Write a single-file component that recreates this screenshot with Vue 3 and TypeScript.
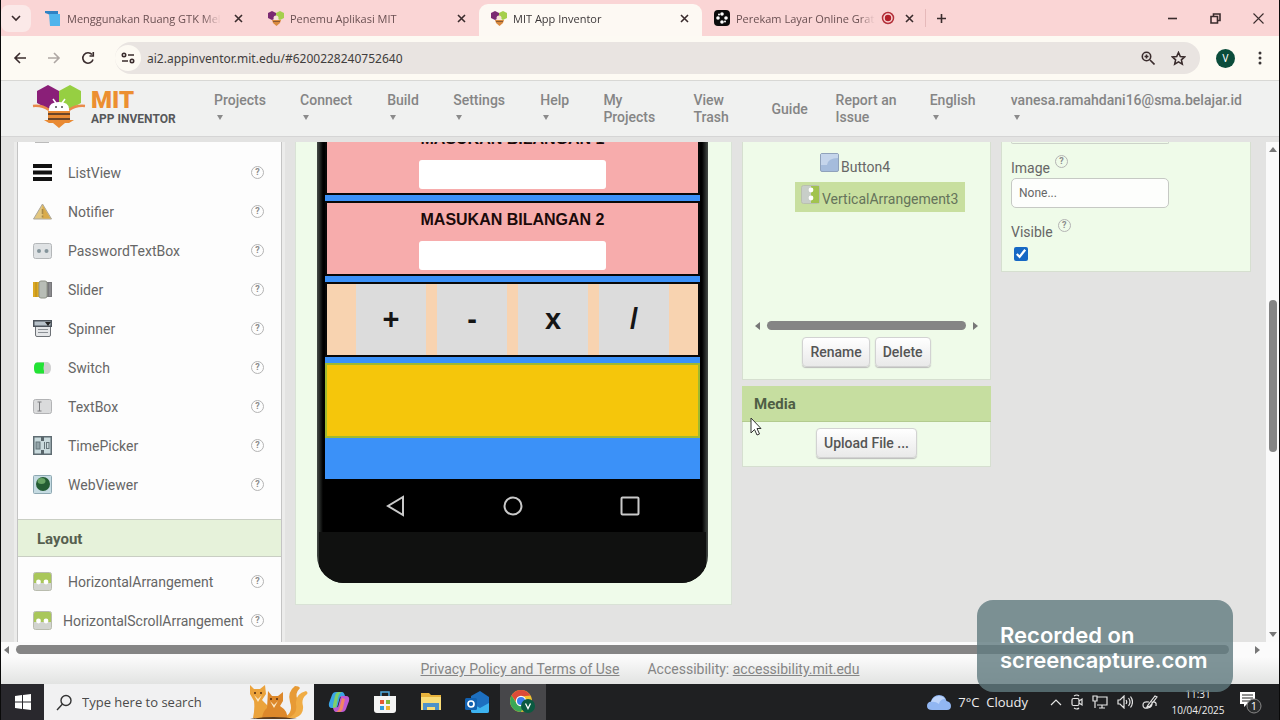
<script setup lang="ts">
interface PaletteItem { name: string; art: string; wide?: boolean }
interface MenuItem { label: string; drop: boolean }
interface BrowserTab { title: string; icon: 'doc' | 'bee' | 'rec'; active: boolean; recording: boolean }

const tabs: BrowserTab[] = [
  { title: 'Menggunakan Ruang GTK Mela', icon: 'doc', active: false, recording: false },
  { title: 'Penemu Aplikasi MIT', icon: 'bee', active: false, recording: false },
  { title: 'MIT App Inventor', icon: 'bee', active: true, recording: false },
  { title: 'Perekam Layar Online Gratis', icon: 'rec', active: false, recording: true },
]

const tabArt: Record<BrowserTab['icon'], string> = {
  doc: '<path d="M0 1h13v4h-8L3 4 0 3z" fill="#2f82c4"/><path d="M4 4h11v12H5z" fill="#4fb4ec"/>',
  bee: '<path d="M0 3l4-2 4 2v5l-4 2-4-2z" fill="#7a2a72"/><path d="M8 3l4-2 4 2v5l-4 2-4-2z" fill="#a5cf4c"/><circle cx="8" cy="8" r="2.500" fill="#f7e3d8"/><path d="M4 10h9l-1 3-3.500 3L5 13z" fill="#d98a3f"/><path d="M5 11.500h7" stroke="#8b5a33"/>',
  rec: '<rect width="16" height="16" rx="4" fill="#0b0b0b"/><g fill="#fff"><circle cx="8" cy="4" r="1.800"/><circle cx="8" cy="12" r="1.800"/><circle cx="4" cy="8" r="1.800"/><circle cx="12" cy="8" r="1.800"/><circle cx="5" cy="4.500" r="1"/><circle cx="11" cy="11.500" r="1"/></g>',
}

const menu: MenuItem[] = [
  { label: 'Projects', drop: true },
  { label: 'Connect', drop: true },
  { label: 'Build', drop: true },
  { label: 'Settings', drop: true },
  { label: 'Help', drop: true },
  { label: 'My Projects', drop: false },
  { label: 'View Trash', drop: false },
  { label: 'Guide', drop: false },
  { label: 'Report an Issue', drop: false },
  { label: 'English', drop: true },
  { label: 'vanesa.ramahdani16@sma.belajar.id', drop: true },
]

const arrangeArt =
  '<rect x=".5" y=".5" width="18" height="18" rx="2" fill="#d2d4cf" stroke="#b9bcae"/><path d="M1 2.500Q1 1 2.500 1h14Q18 1 18 2.500V11H1z" fill="#a9c75a"/><circle cx="5.500" cy="10" r="2.400" fill="#fff"/><circle cx="13" cy="10" r="2.400" fill="#fff"/>'

const userInterface: PaletteItem[] = [
  { name: 'ListView', art: '<path d="M0 3h19M0 9.500h19M0 16h19" stroke="#111" stroke-width="4"/>' },
  { name: 'Notifier', art: '<path d="M9.500 2L18.500 17H.5z" fill="#e3c77f" stroke="#aaa69a"/><path d="M9.500 3L17.500 16.500h-8z" fill="#d9ab4a"/><path d="M9.500 7v5M9.500 13.500v2" stroke="#a88a48" stroke-width="1.600"/>' },
  { name: 'PasswordTextBox', art: '<rect x=".5" y="2.500" width="18" height="15" rx="2" fill="#dfe2e4" stroke="#b4b7b9"/><circle cx="6" cy="10" r="2" fill="#84949b"/><circle cx="13.500" cy="10" r="2" fill="#84949b"/>' },
  { name: 'Slider', art: '<path d="M0 2h8v15H0z" fill="#dca923"/><path d="M12 2h7v15h-7z" fill="#77777a"/><rect x="6" y="1" width="8" height="17" rx="2" fill="#b8bdb6" stroke="#909488"/><path d="M3 2v15" stroke="#b68a1a"/><path d="M17 3v13" stroke="#a0a0a2"/>' },
  { name: 'Spinner', art: '<rect x="2.500" y="5.500" width="15" height="12" rx="1.500" fill="#e4e6e8" stroke="#6d7176"/><rect x=".75" y="1.750" width="17.500" height="5.500" fill="#b8c2ca" stroke="#4d545c" stroke-width="1.500"/><path d="M12 3h6l-3 4z" fill="#222"/><path d="M5 10.500h10M5 13.500h10" stroke="#8b9095"/>' },
  { name: 'Switch', art: '<rect x="1" y="4" width="17" height="12" rx="5" fill="#d4d4d4"/><path d="M4 4.500h7v11H4q-3 0-3-5.500t3-5.500z" fill="#22e334"/><ellipse cx="14" cy="10" rx="3.500" ry="6" fill="#cfd0cf"/>' },
  { name: 'TextBox', art: '<rect x=".5" y="2.500" width="18" height="14" rx="2" fill="#dadbdc" stroke="#b2b3b5"/><path d="M4.500 5h4M6.500 5v9M4.500 14h4" stroke="#7c7d80"/>' },
  { name: 'TimePicker', art: '<rect x=".75" y=".75" width="17.500" height="17.500" fill="#c9dadd" stroke="#5f6c72" stroke-width="1.500"/><path d="M9.500 1v4M9.500 14v4" stroke="#59666b" stroke-width="3"/><rect x="3" y="6" width="4" height="7" fill="#93a4a8" stroke="#65757a"/><path d="M11.500 6v7" stroke="#65757a"/><rect x="13.500" y="6.500" width="2.500" height="6" fill="none" stroke="#65757a"/>' },
  { name: 'WebViewer', art: '<rect x=".5" y=".5" width="18" height="18" rx="1" fill="#c5dbe2" stroke="#8ea8b2"/><circle cx="10" cy="9" r="7" fill="#245c33"/><ellipse cx="8.500" cy="6" rx="4" ry="3" fill="#67a364"/>' },
]

const layout: PaletteItem[] = [
  { name: 'HorizontalArrangement', art: arrangeArt },
  { name: 'HorizontalScrollArrangement', art: arrangeArt, wide: true },
]

const operators = ['+', '-', 'x', '/']
</script>

<template>
  <div class="screen">
    <header class="tabstrip">
      <button class="tab-search" aria-label="Search tabs"><svg width="10" height="8" viewBox="0 0 10 8"><path d="M1 2l4 4 4-4" /></svg></button>
      <div v-for="t in tabs" :key="t.title" class="tab" :class="{ active: t.active, rec: t.recording }">
        <svg class="fav" width="16" height="17" viewBox="0 0 16 17" v-html="tabArt[t.icon]"></svg>
        <span class="tab-title">{{ t.title }}</span>
        <svg v-if="t.recording" class="rec-dot" width="14" height="14" viewBox="0 0 14 14"><circle cx="7" cy="7" r="5.500" fill="none" stroke="#b3303a" stroke-width="1.500" /><circle cx="7" cy="7" r="3.200" fill="#b3202a" /></svg>
        <button class="tab-close" aria-label="Close tab"><svg width="9" height="9" viewBox="0 0 9 9"><path d="M1 1l7 7M8 1L1 8" /></svg></button>
      </div>
      <button class="new-tab" aria-label="New tab"><svg width="11" height="11" viewBox="0 0 11 11"><path d="M5.500 1v9M1 5.500h9" /></svg></button>
      <div class="win">
        <button aria-label="Minimize"><svg width="11" height="11" viewBox="0 0 11 11"><path d="M1 5.500h9" /></svg></button>
        <button aria-label="Restore"><svg width="11" height="11" viewBox="0 0 11 11"><path d="M1 3.500h6.500V10H1zM3.500 3V1H10v6.500H8" /></svg></button>
        <button aria-label="Close"><svg width="11" height="11" viewBox="0 0 11 11"><path class="thin" d="M.5.5l10 10M10.500.5l-10 10" /></svg></button>
      </div>
    </header>

    <div class="toolbar">
      <button aria-label="Back"><svg width="14" height="14" viewBox="0 0 14 14"><path d="M13 7H2M7 2L2 7l5 5" /></svg></button>
      <button aria-label="Forward" class="dim"><svg width="14" height="14" viewBox="0 0 14 14"><path d="M1 7h11M7 2l5 5-5 5" /></svg></button>
      <button aria-label="Reload"><svg width="14" height="14" viewBox="0 0 14 14"><path d="M12 8.500A5.200 5.200 0 1 1 11 3.600M12.300 1v4H8.500" /></svg></button>
      <div class="omnibox">
        <span class="site"><svg width="14" height="12" viewBox="0 0 14 12"><circle cx="3" cy="3" r="1.700" /><path d="M7 3h6M1 9h6" /><circle cx="11" cy="9" r="1.700" /></svg></span>
        <input type="text" aria-label="Address" value="ai2.appinventor.mit.edu/#6200228240752640" />
        <button aria-label="Zoom"><svg width="14" height="14" viewBox="0 0 14 14"><circle cx="5.500" cy="5.500" r="4.200" /><path d="M9 9l4.500 4.500M3.500 5.500h4M5.500 3.500v4" /></svg></button>
        <button aria-label="Bookmark"><svg width="15" height="15" viewBox="0 0 15 15"><path d="M7.500 1.500l1.800 4 4.300.4-3.200 2.900.9 4.300-3.800-2.200-3.800 2.200.9-4.300L1.400 5.900l4.300-.4z" /></svg></button>
      </div>
      <button class="avatar">V</button>
      <button aria-label="Browser menu" class="dots"><svg width="4" height="14" viewBox="0 0 4 14"><circle cx="2" cy="2" r="1.500" /><circle cx="2" cy="7" r="1.500" /><circle cx="2" cy="12" r="1.500" /></svg></button>
    </div>

    <div class="appbar">
      <div class="brand">
        <svg width="54" height="44" viewBox="0 0 54 44">
          <path d="M5 6L16 0l11 6v12l-11 6-11-6z" fill="#8a1f78" />
          <path d="M27 6l11-6 11 6v12l-11 6-11-6z" fill="#96cf42" />
          <path d="M1 21q9-1 16 4M53 21q-9-1-16 4" fill="none" stroke="#e98a4b" stroke-width="2.500" />
          <path d="M17 24q0-7 10-7t10 7v3H17z" fill="#fff" />
          <path d="M24 18l-3-4M30 18l3-4" stroke="#fff" stroke-width="1.500" />
          <circle cx="24" cy="22" r="1" fill="#4b4b4b" /><circle cx="30" cy="22" r="1" fill="#4b4b4b" />
          <path d="M16 26h22v9h4l-5 3h-4l-6 5-6-5h-4l-5-3h4z" fill="#e98a33" />
          <path d="M16 29h22M16 34h22" stroke="#6b4528" stroke-width="2" />
        </svg>
        <div class="wordmark"><strong>MIT</strong><span>APP INVENTOR</span></div>
      </div>
      <nav class="menu">
        <a v-for="m in menu" :key="m.label" href="#" :class="{ drop: m.drop }">
          {{ m.label }}
          <svg v-if="m.drop" width="6" height="5" viewBox="0 0 6 5"><path d="M0 0h6L3 5z" /></svg>
        </a>
      </nav>
    </div>

    <div class="workarea">
      <main class="columns">
        <aside class="palette">
          <ul>
            <li class="cut"><i class="icon-end"></i></li>
            <li v-for="p in userInterface" :key="p.name">
              <svg width="19" height="19" viewBox="0 0 19 19" v-html="p.art"></svg>
              <span>{{ p.name }}</span><button class="help" :aria-label="'Help for ' + p.name">?</button>
            </li>
          </ul>
          <h2>Layout</h2>
          <ul class="second">
            <li v-for="p in layout" :key="p.name" :class="{ wide: p.wide }">
              <svg width="19" height="19" viewBox="0 0 19 19" v-html="p.art"></svg>
              <span>{{ p.name }}</span><button class="help" :aria-label="'Help for ' + p.name">?</button>
            </li>
          </ul>
        </aside>

        <section class="viewer">
          <div class="phone">
            <div class="display">
              <div class="block pink"><label for="n1">MASUKAN BILANGAN 1</label><input id="n1" type="text" /></div>
              <div class="block pink"><label for="n2">MASUKAN BILANGAN 2</label><input id="n2" type="text" /></div>
              <div class="block ops"><button v-for="o in operators" :key="o">{{ o }}</button></div>
              <div class="block gold"></div>
            </div>
            <div class="navkeys">
              <svg width="20" height="22" viewBox="0 0 20 22"><path d="M17 2v18L2 11z" /></svg>
              <svg width="20" height="22" viewBox="0 0 20 22"><circle cx="10" cy="11" r="8.500" /></svg>
              <svg width="20" height="22" viewBox="0 0 20 22"><rect x="1.500" y="2.500" width="17" height="17" rx="1" /></svg>
            </div>
            <div class="chin"></div>
          </div>
        </section>

        <div class="stack">
          <section class="panel tree">
            <div class="node child">
              <svg width="19" height="19" viewBox="0 0 19 19"><rect x=".5" y=".5" width="18" height="18" rx="1.500" fill="#a5bcdc" stroke="#90a2bb" /><path d="M1 1h17v4Q8 5 7 12H1z" fill="#c5d5eb" /></svg>
              <span>Button4</span>
            </div>
            <div class="node selected">
              <svg width="19" height="19" viewBox="0 0 19 19"><rect x=".5" y=".5" width="18" height="18" rx="2" fill="#c8cec8" stroke="#b9c0ae" /><path d="M10 1h8v17h-8z" fill="#a2c34f" /><circle cx="10" cy="5" r="2.400" fill="#fff" /><circle cx="10" cy="13" r="2.400" fill="#fff" /></svg>
              <span>VerticalArrangement3</span>
            </div>
            <div class="hbar small"><i class="left"></i><b></b><i class="right"></i></div>
            <div class="actions"><button class="btn">Rename</button><button class="btn">Delete</button></div>
          </section>
          <section class="panel media">
            <h2>Media</h2>
            <div class="actions"><button class="btn">Upload File ...</button></div>
          </section>
        </div>

        <section class="panel props">
          <div class="field-end"></div>
          <div class="prop"><label for="img">Image</label><button class="help" aria-label="Help for Image">?</button></div>
          <input id="img" class="field" type="text" value="None..." />
          <div class="prop"><label for="vis">Visible</label><button class="help" aria-label="Help for Visible">?</button></div>
          <input id="vis" class="check" type="checkbox" checked />
        </section>
      </main>
      <div class="vbar"><i class="up"></i><b></b><i class="down"></i></div>
    </div>

    <div class="hbar page"><i class="left"></i><b></b><i class="right"></i></div>

    <footer class="legal">
      <a href="#">Privacy Policy and Terms of Use</a>
      <span>Accessibility: <a href="#">accessibility.mit.edu</a></span>
    </footer>

    <div class="taskbar">
      <button class="start" aria-label="Start"><svg width="16" height="16" viewBox="0 0 16 16"><path d="M0 2l7-1v6.500H0zM8 1l8-1v7.500H8zM0 8.500h7V15l-7-1zM8 8.500h8V16l-8-1z" fill="#fff" /></svg></button>
      <div class="search">
        <svg width="17" height="17" viewBox="0 0 17 17"><circle cx="10" cy="6.500" r="5" /><path d="M6.500 10L1 16" /></svg>
        <input type="text" aria-label="Search" placeholder="Type here to search" />
        <svg class="fox" width="60" height="36" viewBox="0 0 60 36">
          <path d="M34 34Q46 30 42 18 39 8 47 2q4 0 5 2-6 6-2 12 3 8-4 18z" fill="#e79a35" />
          <path d="M40 34q10-4 8-14-1-10 10-13 3 2 0 4-5 4-3 11 1 9-8 12z" fill="#f0ac44" />
          <path d="M2 1l4 4h6l5-4 1 9-4 6 6 6 2 12H5q2-9 1-17L2 10z" fill="#eba33c" />
          <path d="M20 7l4 5h6l5-4v9l-3 5q8 5 7 12H14q1-7 5-10z" fill="#dd882b" />
          <path d="M6 11l4 4 4-4-4 7zM22 17l4 4 4-4-4 7z" fill="#fce8c5" />
          <path d="M6 9h2M12 9h2M22 15h2M28 15h2" stroke="#4d2a12" stroke-width="1.500" /><path d="M2 35q24-4 47 0z" fill="#5c3b1f" />
        </svg>
      </div>
      <div class="apps">
        <button aria-label="Copilot"><svg width="22" height="22" viewBox="0 0 22 22"><path d="M8 1h6q2 0 3 4l-5 1-3 11H4q-4 0-3-5l3-8q1-3 4-3z" fill="#3aa5e6" /><path d="M5 14l2-9q1-4 4-4h3q-3 1-4 6L8 17H5z" fill="#7ed06a" /><path d="M14 21H8q-2 0-3-4l5-1 3-11h5q4 0 3 5l-3 8q-1 3-4 3z" fill="#bd59d2" /><path d="M17 8l-2 9q-1 4-4 4H8q3-1 4-6l2-8z" fill="#f18564" /></svg></button>
        <button aria-label="Store"><svg width="22" height="22" viewBox="0 0 22 22"><path d="M7 5V1h8v4" fill="none" stroke="#4ea9df" stroke-width="1.500" /><path d="M0 5h22v14q0 3-3 3H3q-3 0-3-3z" fill="#f4f4f4" /><path d="M6 9h4v4H6z" fill="#e65a36" /><path d="M12 9h4v4h-4z" fill="#7fb93c" /><path d="M6 15h4v4H6z" fill="#319edb" /><path d="M12 15h4v4h-4z" fill="#efb52f" /></svg></button>
        <button aria-label="File Explorer"><svg width="22" height="22" viewBox="0 0 22 22"><path d="M1 2h8l2 2h10v15H1z" fill="#e8b33c" /><path d="M1 6h20v13H1z" fill="#f9dc77" /><path d="M3 19v-7h16v7h-4v-3H7v3z" fill="#4e91c8" /></svg></button>
        <button aria-label="Outlook"><svg width="24" height="22" viewBox="0 0 24 22"><path d="M6 5l9-5 9 6v14q0 2-2 2H8q-2 0-2-2z" fill="#1d6fc0" /><path d="M6 12l9 5 9-5v8q0 2-2 2H8q-2 0-2-2z" fill="#3db3ef" /><rect y="7" width="12" height="12" rx="1.500" fill="#1261b1" /><circle cx="6" cy="13" r="3" fill="none" stroke="#fff" stroke-width="1.700" /></svg></button>
        <button aria-label="Chrome" class="on"><svg width="26" height="24" viewBox="0 0 26 24"><circle cx="11" cy="11" r="11" fill="#f1c232" /><path d="M1.500 5.500A11 11 0 0 1 20.500 5.500L11 6.500 7 13z" fill="#dd4b39" /><path d="M1.500 5.500A11 11 0 0 0 11 22l4-8H7z" fill="#3aa757" /><circle cx="11" cy="11" r="5.200" fill="#fff" /><circle cx="11" cy="11" r="4" fill="#3b7ded" /><circle cx="18" cy="16" r="7" fill="#0b5a41" /><path d="M15.500 13.500l2.500 5 2.500-5" fill="none" stroke="#fff" stroke-width="1.300" /></svg></button>
      </div>
      <div class="tray">
        <svg width="24" height="15" viewBox="0 0 24 15"><path d="M5 15q-5 0-5-4 0-4 4-4.500Q6 0 12 0t7.500 6Q24 7 24 11t-4 4z" fill="#91b6f2" /><path d="M4 7q2-6 8-6 4 0 6 3-5 0-6 5Q8 6 4 7z" fill="#bdd4fa" /></svg>
        <span class="weather">7°C&nbsp; Cloudy</span>
        <svg class="line" width="12" height="8" viewBox="0 0 12 8"><path d="M1 7l5-5 5 5" /></svg>
        <svg class="line" width="12" height="16" viewBox="0 0 12 16"><path d="M3 2q3-2 5 0M3 14q3 2 5 0" /><rect x="1" y="4.500" width="7" height="7" rx="1.500" /><path d="M8 7l3-2v6L8 9" /></svg>
        <svg class="line" width="16" height="14" viewBox="0 0 16 14"><path d="M5 2h10v8H5M10 10v3M7 13h6M1 1h4v5H1zM3 6v7" /></svg>
        <svg class="line" width="16" height="14" viewBox="0 0 16 14"><path d="M1 5h2l4-4v12L3 9H1zM9 5q1.500 2 0 4M11.500 3q3 4 0 8M13.500 1.500q4 5.500 0 11" /></svg>
        <svg class="line" width="16" height="16" viewBox="0 0 16 16"><path d="M6 11L13 2l2 1-7 9-3 1zM7 8Q1 7 1 11t5 3q5-1 4-6 5-1 4 4" /></svg>
        <div class="clock"><span>11:31</span><span>10/04/2025</span></div>
        <button class="notes" aria-label="Notifications"><svg width="24" height="24" viewBox="0 0 24 24"><path d="M1 2h15v12h-8l-3 3v-3H1z" fill="#fff" /><path d="M3 5h11M3 8h11M3 11h8" stroke="#222" stroke-width="1" /><circle cx="15" cy="16" r="7" fill="#2a2c2d" stroke="#888" /><text x="15" y="20">1</text></svg></button>
      </div>
    </div>

    <svg class="pointer" width="12" height="20" viewBox="0 0 12 20"><path d="M1 1v15l3.500-3.500L7 18l2.500-1L7 11.500h4z" fill="#fff" stroke="#333" /></svg>
    <div class="watermark"><span>Recorded on</span><span>screencapture.com</span></div>
  </div>
</template>

<style>
html, body { margin: 0; overflow: hidden; background: #000; }
</style>

<style scoped>
* { box-sizing: border-box; }
button, input { font: inherit; color: inherit; margin: 0; }
button { border: 0; padding: 0; background: none; display: flex; align-items: center; justify-content: center; flex: none; }
svg { display: block; flex: none; }
ul, h2 { margin: 0; padding: 0; list-style: none; }
.screen { position: relative; height: 100vh; display: flex; flex-direction: column; border: solid #0a0a0a; border-width: 0 1px; overflow: hidden; font-family: Roboto, "Liberation Sans", sans-serif; font-size: 14px; color: #666; background: #e3e3e2; }

.tabstrip { flex: none; height: 36px; display: flex; align-items: center; background: #fad5d5; font-family: "Open Sans", "Noto Sans", sans-serif; font-size: 11px; color: #6a5052; }
.tabstrip button svg, .toolbar svg { fill: none; stroke: #3a2c2d; stroke-width: 1.6; }
.tabstrip .thin { stroke-width: 1.1; }
.tab-search { width: 30px; height: 27px; margin-right: 2px; border-radius: 8px; background: #fbe9e8; }
.tab { flex: 0 1 223px; min-width: 0; height: 36px; display: flex; align-items: center; padding: 0 12px; gap: 6px; }
.tab.active { height: 32px; align-self: flex-end; padding-bottom: 4px; border-radius: 9px 9px 0 0; background: #fdf9f3; color: #3c3839; }
.tab-title { flex: 1; min-width: 0; overflow: hidden; white-space: nowrap; mask-image: linear-gradient(90deg, #000 88%, transparent); }
.tab-close { width: 12px; height: 12px; margin-left: 5px; }
.rec { padding-right: 10px; }
.rec .tab-close { margin-left: 2px; }
.new-tab { width: 32px; height: 18px; border-left: 1px solid #e6b9ba; }
.win { margin-left: auto; display: flex; gap: 32px; padding-right: 15px; }

.toolbar { flex: none; height: 45px; display: flex; align-items: center; padding: 0 12px; background: #fdfaf3; border-bottom: 1px solid #d8d8d5; }
.toolbar > button { width: 14px; margin-right: 20px; }
.toolbar > .dim { opacity: .4; }
.omnibox { flex: 1; height: 32px; display: flex; align-items: center; border-radius: 16px; background: #e9e4e1; padding: 0 14px 0 0; gap: 16px; }
.site { width: 26px; height: 26px; border-radius: 13px; background: #fdfaf3; display: grid; place-items: center; }
.omnibox input { flex: 1; min-width: 0; border: 0; padding: 0; margin-left: -10px; background: none; outline: 0; color: #413d3c; font-family: "Noto Sans", "Open Sans", sans-serif; font-size: 12px; }
.toolbar > .avatar { width: 19px; height: 19px; margin: 0 23px 0 16px; border-radius: 10px; background: #0b4c3b; color: #fff; font-size: 10px; }
.toolbar > .dots { width: 4px; margin-right: 5px; }
.dots svg { fill: #3a3535; stroke: none; }

.appbar { flex: none; height: 56px; display: flex; background: #f0f1f0; border-bottom: 1px solid #d5d5d5; padding: 4px 33px 0 31px; }
.brand { width: 182px; display: flex; gap: 5px; flex: none; }
.wordmark { display: flex; flex-direction: column; padding-top: 3px; }
.wordmark strong { font-weight: 900; font-size: 24px; line-height: 24px; color: #ec8f31; }
.wordmark span { font-size: 12px; line-height: 14px; font-weight: 700; color: #57585a; white-space: nowrap; }
.menu { flex: 1; display: grid; grid-template-columns: 86fr 87fr 66fr 87fr 63fr 90fr 78fr 64fr 94fr 81fr 235fr; align-items: center; height: 48px; }
.menu a { color: #858585; text-decoration: none; font-size: 14px; line-height: 17px; padding-right: 24px; font-weight: 500; }
.menu a:last-child { padding-right: 0; }
.menu .drop { white-space: nowrap; }
.menu svg { margin: 6px 0 6px 3px; fill: #8b8b8b; }

.workarea { flex: 1; min-height: 0; display: flex; padding-top: 5px; }
.columns { flex: 1; min-width: 0; min-height: 0; display: flex; align-items: flex-start; padding-left: 16px; overflow: hidden; }
.palette { flex: 0 0 265px; height: 100%; overflow: hidden; border: solid #c4c4c4; border-width: 0 1px; background: #fdfdfd; box-shadow: 0 0 0 3px #ececeb; }
.palette li { height: 39px; display: flex; align-items: center; padding: 0 17px 0 15px; font-size: 14px; color: #666; }
.palette li span { flex: 1; margin-left: 16px; white-space: nowrap; }
.palette li.wide span { margin-left: 11px; }
.palette li.cut { height: 11px; align-items: flex-start; }
.icon-end { width: 14px; height: 1px; margin-left: 2px; background: #bbb; border: 0; }
.palette h2 { height: 38px; margin-top: 15px; padding-left: 19px; border: solid #c9cec3; border-width: 1px 0; background: #e6f2da; font-size: 15px; line-height: 38px; color: #56604f; }
.palette .second { padding-top: 5px; }
.help { width: 13px; height: 13px; border: 1px solid #b4b4b4; border-radius: 7px; font-size: 9px; line-height: 11px; font-weight: 700; color: #8c8c8c; }

.viewer { flex: 0 0 437px; margin-left: 13px; padding: 0 23px 21px 21px; overflow: hidden; background: #effbea; border: solid #d9e2d6; border-width: 0 1px 1px; }
.phone { margin-top: -22px; padding: 0 8px; border-radius: 0 0 27px 27px; background: linear-gradient(90deg, #454b47 0, #000 6px, #000 calc(100% - 6px), #454b47 100%); overflow: hidden; }
.display { display: flex; flex-direction: column; gap: 6px; padding-bottom: 41px; background: #3b91f8; font-family: "Liberation Sans", Arial, sans-serif; }
.block { height: 75px; border: 2px solid #080808; }
.pink { display: flex; flex-direction: column; align-items: center; padding-top: 7px; gap: 11px; background: #f7acac; }
.pink label { font-weight: 700; font-size: 16px; line-height: 20px; color: #1a0a0a; }
.pink input { width: 187px; height: 29px; border: 0; border-radius: 3px; background: #fff; }
.ops { display: flex; justify-content: center; gap: 11px; background: #f8d3b0; }
.ops button { width: 70px; background: #dcdcdc; font-size: 29px; font-weight: 700; color: #151515; }
.gold { background: #f5c60b; border-color: #9fb92f; }
.navkeys { height: 53px; display: flex; justify-content: space-around; align-items: center; padding: 0 12px; background: #000; }
.navkeys svg { fill: none; stroke: #c9c9c9; stroke-width: 2; }
.chin { height: 51px; margin: 0 -6px; background: #101110; }

.stack { flex: 0 0 249px; margin-left: 10px; display: flex; flex-direction: column; gap: 6px; }
.panel { background: #effbe9; border: solid #d6dfd0; border-width: 0 1px 1px; }
.tree { height: 238px; padding-top: 8px; display: flex; flex-direction: column; }
.node { display: flex; align-items: flex-start; height: 30px; gap: 2px; font-size: 14px; line-height: 34px; align-self: flex-start; }
.node svg { margin-top: 3px; }
.child { margin-left: 77px; height: 32px; }
.selected { margin-left: 52px; padding: 0 7px 0 6px; background: #c8df9f; color: #65735a; }
.hbar { display: flex; align-items: center; }
.hbar b { flex: 1; height: 9px; border-radius: 5px; background: #858585; }
i { width: 0; height: 0; border: solid transparent; flex: none; }
.left { border-width: 4px 5px 4px 0; border-right-color: #777; }
.right { border-width: 4px 0 4px 5px; border-left-color: #777; }
.up { border-width: 0 4px 5px; border-bottom-color: #777; }
.down { border-width: 5px 4px 0; border-top-color: #777; }
.small { margin-top: auto; padding: 0 12px; gap: 7px; }
.actions { display: flex; justify-content: center; gap: 5px; padding: 7px 0 12px; }
.btn { height: 30px; padding: 0 7px; border: 1px solid #d2d2d2; border-radius: 4px; background: linear-gradient(#fff, #e9e9e9); box-shadow: 0 1px 1px #bbb; font-size: 14px; font-weight: 500; color: #555; }
.media h2 { height: 36px; margin: 0 -1px; padding-left: 12px; background: #c6dea0; border-bottom: 1px solid #b3cb8f; font-size: 15px; line-height: 36px; color: #4f5e45; }
.media .actions { padding: 6px 0 8px; }
.props { flex: 0 0 250px; margin-left: 10px; padding: 0 9px; height: 130px; }
.field-end { width: 158px; height: 2px; border: solid #ccd3c9; border-width: 0 1px 1px; border-radius: 0 0 4px 4px; }
.prop { display: flex; gap: 5px; height: 34px; align-items: center; font-size: 14px; padding-top: 14px; }
.prop label { line-height: 18px; }
.prop .help { margin-bottom: 14px; }
.field { display: block; width: 158px; height: 30px; padding: 0 7px; border: 1px solid #c6c9c4; border-radius: 5px; background: #fdfefc; font-size: 12px; color: #666; }
.check { display: block; width: 14px; height: 14px; margin: 5px 3px; accent-color: #1668c4; }
.vbar { flex: none; width: 13px; display: flex; flex-direction: column; align-items: center; background: #fafafa; padding: 5px 0; }
.vbar b { width: 8px; flex: 150; border-radius: 4px; background: #858585; }
.vbar .up { margin-bottom: 148px; }
.vbar .down { margin-top: 180px; }
.page { flex: none; height: 15px; padding: 0 19px 0 3px; gap: 7px; background: #fbfbfb; }
.page .right { margin-left: 19px; }
.legal { flex: none; height: 27px; display: flex; align-items: center; justify-content: center; gap: 28px; padding-bottom: 3px; background: linear-gradient(#fbfbfb, #e2e3e2); color: #858585; font-size: 14px; }
.legal a { color: #858585; }

.taskbar { flex: none; height: 36px; display: flex; align-items: stretch; background: #1f2022; color: #eee; font-family: "Open Sans", "Noto Sans", sans-serif; }
.start { width: 43px; background: #29282d; }
.search { flex: 0 0 270px; min-width: 0; display: flex; align-items: center; padding: 0 6px 0 12px; gap: 9px; background: #f1f1f2; }
.search > svg:first-child { fill: none; stroke: #333; stroke-width: 1.400; }
.search input { flex: 1; min-width: 0; border: 0; padding: 0; background: none; font-size: 13px; }
.search input::placeholder { color: #4a4a4a; opacity: 1; }
.apps { display: flex; padding-left: 2px; }
.apps button { width: 46px; }
.apps .on { background: #47474a; }
.tray { margin-left: auto; display: flex; align-items: center; gap: 9px; padding-right: 16px; }
.weather { font-size: 13px; margin: 0 13px 0 -2px; white-space: nowrap; }
.line { fill: none; stroke: #e5e5e5; stroke-width: 1.2; }
.clock { display: flex; flex-direction: column; align-items: center; width: 56px; font-size: 10px; line-height: 16px; margin-left: 3px; }
.notes { margin-left: 4px; }
.notes text { fill: #fff; font-size: 11px; text-anchor: middle; }

.pointer { position: absolute; left: 749px; top: 417px; }
.watermark { position: absolute; right: 46px; bottom: 28px; width: 256px; height: 92px; padding: 23px; border-radius: 16px; background: rgba(96, 122, 127, .8); color: #fff; font-family: Inter, sans-serif; font-size: 22px; font-weight: 600; line-height: 25px; display: flex; flex-direction: column; white-space: nowrap; }
</style>
